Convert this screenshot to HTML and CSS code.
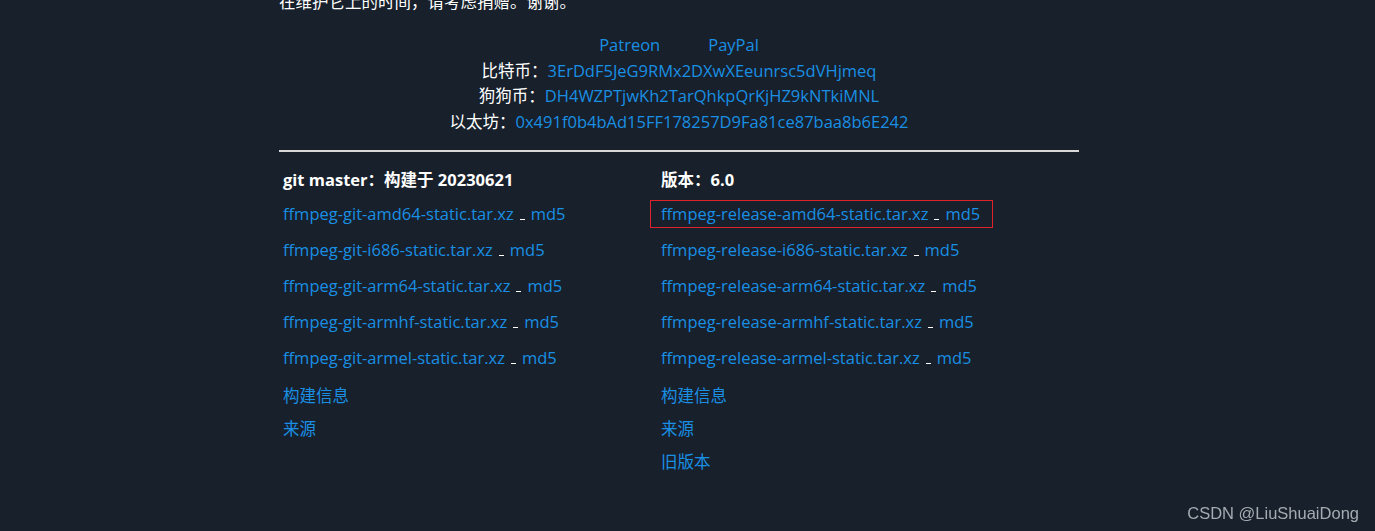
FILE: index.html
```html
<!DOCTYPE html>
<html lang="zh">
<head>
<meta charset="utf-8">
<title>FFmpeg Static Builds</title>
<link rel="stylesheet" href="styles.css">
</head>
<body>
<div class="page">
  <p class="intro">在维护它上的时间，请考虑捐赠。谢谢。</p>
  <div class="donate">
    <div class="donate-links"><a href="#">Patreon</a><a href="#">PayPal</a></div>
    <div>比特币：<a href="#">3ErDdF5JeG9RMx2DXwXEeunrsc5dVHjmeq</a></div>
    <div>狗狗币：<a href="#">DH4WZPTjwKh2TarQhkpQrKjHZ9kNTkiMNL</a></div>
    <div>以太坊：<a href="#">0x491f0b4bAd15FF178257D9Fa81ce87baa8b6E242</a></div>
  </div>
  <hr class="rule">
  <div class="builds">
    <div class="col col-left">
      <div class="head">git master：构建于 20230621</div>
      <div class="file"><a href="#">ffmpeg-git-amd64-static.tar.xz</a><span class="dash"></span><a href="#">md5</a></div>
      <div class="file"><a href="#">ffmpeg-git-i686-static.tar.xz</a><span class="dash"></span><a href="#">md5</a></div>
      <div class="file"><a href="#">ffmpeg-git-arm64-static.tar.xz</a><span class="dash"></span><a href="#">md5</a></div>
      <div class="file"><a href="#">ffmpeg-git-armhf-static.tar.xz</a><span class="dash"></span><a href="#">md5</a></div>
      <div class="file"><a href="#">ffmpeg-git-armel-static.tar.xz</a><span class="dash"></span><a href="#">md5</a></div>
      <div class="info"><a href="#">构建信息</a></div>
      <div class="info"><a href="#">来源</a></div>
    </div>
    <div class="col col-right">
      <div class="head">版本：6.0</div>
      <div class="file"><span class="mark"><a href="#">ffmpeg-release-amd64-static.tar.xz</a><span class="dash"></span><a href="#">md5</a></span></div>
      <div class="file"><a href="#">ffmpeg-release-i686-static.tar.xz</a><span class="dash"></span><a href="#">md5</a></div>
      <div class="file"><a href="#">ffmpeg-release-arm64-static.tar.xz</a><span class="dash"></span><a href="#">md5</a></div>
      <div class="file"><a href="#">ffmpeg-release-armhf-static.tar.xz</a><span class="dash"></span><a href="#">md5</a></div>
      <div class="file"><a href="#">ffmpeg-release-armel-static.tar.xz</a><span class="dash"></span><a href="#">md5</a></div>
      <div class="info"><a href="#">构建信息</a></div>
      <div class="info"><a href="#">来源</a></div>
      <div class="info"><a href="#">旧版本</a></div>
    </div>
  </div>
</div>
<div class="watermark">CSDN @LiuShuaiDong</div>
</body>
</html>
```

FILE: styles.css
```css
html, body {
  margin: 0;
  padding: 0;
  height: 100%;
  overflow: hidden;
}
body {
  background: #17202b;
  color: #ffffff;
  font-family: "Open Sans", "Noto Sans CJK SC", sans-serif;
  font-size: 16.5px;
  line-height: 26px;
  padding-right: 17px;
  box-sizing: border-box;
}
a {
  color: #1a8fe3;
  text-decoration: none;
}
.page {
  width: 800px;
  margin: -11px auto 0;
}
.intro {
  margin: 0;
}
.donate {
  margin-top: 17px;
  text-align: center;
  line-height: 25.5px;
}
.donate-links {
  display: flex;
  justify-content: center;
  gap: 48px;
}
.rule {
  margin: 16px 0 0;
  border: 0;
  border-top: 2px solid #d8d8d8;
  height: 0;
}
.builds {
  display: grid;
  grid-template-columns: 378px 1fr;
  padding-top: 15px;
}
.col {
  display: flex;
  flex-direction: column;
  padding-left: 4px;
}
.head {
  font-weight: 700;
  margin-bottom: 3px;
}
.file {
  padding: 5px 0;
}
.info {
  padding: 4px 0;
}
.col .file + .info {
  margin-top: 3px;
}
.info + .info {
  margin-top: -1px;
}
.dash {
  display: inline-block;
  width: 5px;
  height: 1px;
  background: #ffffff;
  margin: 0 6px;
  vertical-align: baseline;
}
.mark {
  display: inline-block;
  border: 1px solid #e0202a;
  padding: 0 12px 0 10px;
  margin: -1px 0 -1px -11px;
}
.watermark {
  position: fixed;
  right: 16px;
  bottom: 8px;
  color: #a6abb1;
  font-family: "Liberation Sans", Arial, sans-serif;
  font-size: 16.5px;
  line-height: 20px;
}
```
